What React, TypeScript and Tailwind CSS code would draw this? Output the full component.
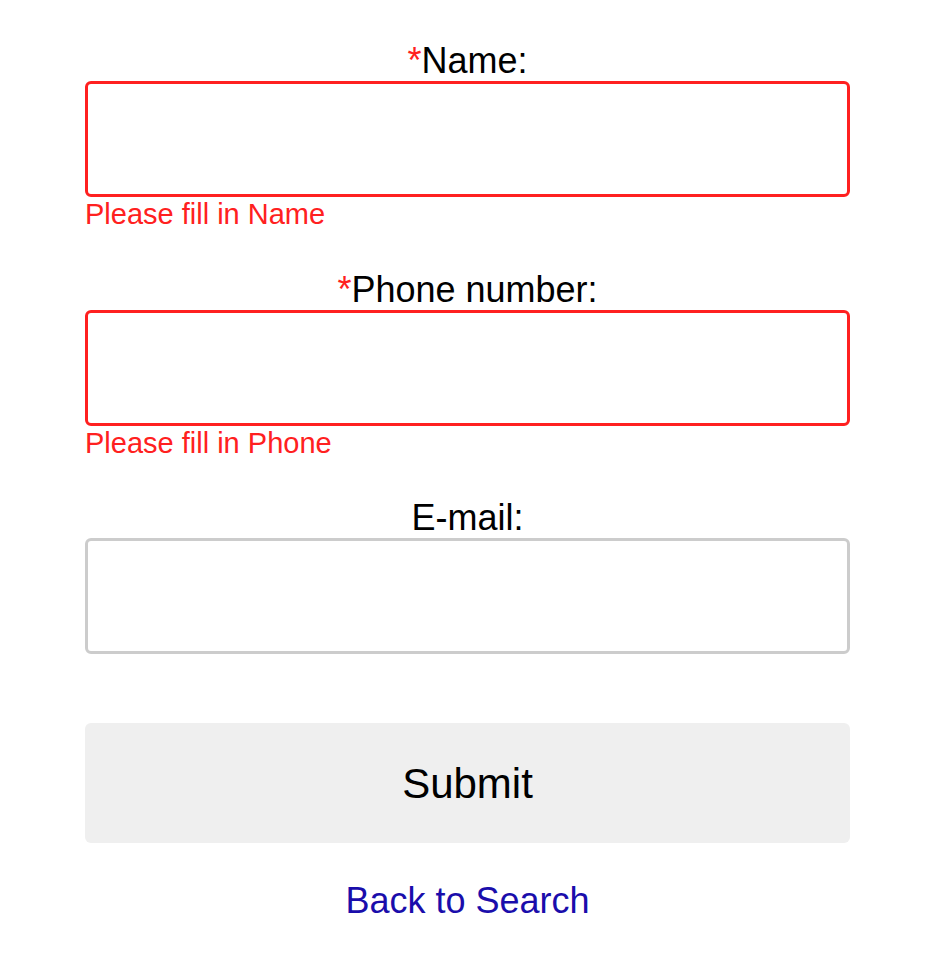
export default function App() {
    const fields = [
        { label: "Name:", required: true, error: "Please fill in Name", gap: "" },
        { label: "Phone number:", required: true, error: "Please fill in Phone", gap: "mt-[38px]" },
        { label: "E-mail:", required: false, error: "", gap: "mt-[37px]" },
    ];

    return (
        <main className="min-h-screen bg-white font-['Liberation_Sans',Arial,sans-serif] text-black">
            <form className="w-[765px] ml-[85px] pt-[40px] flex flex-col" onSubmit={(e) => e.preventDefault()}>
                {fields.map((f) => (
                    <div key={f.label} className={f.gap}>
                        <label className="block text-center text-[36px] leading-[41px]">
                            {f.required && <span className="text-[#ff2020]">*</span>}
                            {f.label}
                        </label>
                        <input
                            type="text"
                            className={
                                f.error
                                    ? "block w-full h-[116px] rounded-[6px] border-[3px] border-[#ff2020] outline-none px-3 text-[36px]"
                                    : "block w-full h-[116px] rounded-[6px] border-[3px] border-[#cccccc] outline-none px-3 text-[36px]"
                            }
                        />
                        {f.error && (
                            <div className="pt-[1px] text-[29px] leading-[33px] text-[#ff2020]">{f.error}</div>
                        )}
                    </div>
                ))}

                <button
                    type="submit"
                    className="mt-[69px] w-full h-[120px] rounded-[6px] bg-[#efefef] text-[42px] text-black"
                >
                    Submit
                </button>

                <a href="#" className="mt-[37px] block text-center text-[36px] leading-[41px] text-[#1a0dab]">
                    Back to Search
                </a>
            </form>
        </main>
    );
}
